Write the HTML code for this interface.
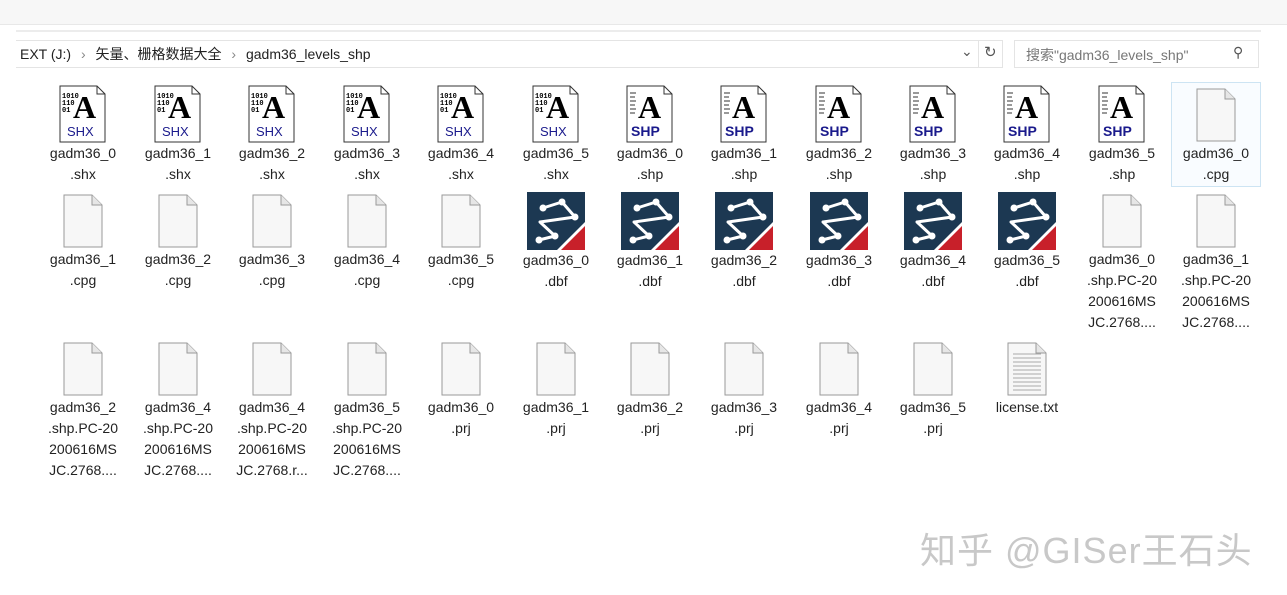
<!DOCTYPE html>
<html><head><meta charset="utf-8"><style>
body{margin:0;width:1287px;height:595px;background:#fff;position:relative;overflow:hidden;font-family:"Liberation Sans","Noto Sans CJK SC",sans-serif;}
.it{position:absolute;width:92px;text-align:center;font-size:14px;line-height:21px;color:#222;}
.it svg{display:block;margin:0 auto;}
.a{position:absolute;}
</style></head><body>
<div class="a" style="left:0;top:0;width:1287px;height:24px;background:#f7f7f7;border-bottom:1px solid #e8e8e8"></div>
<div class="a" style="left:16px;top:30px;width:1245px;height:2px;background:#ececec"></div>
<div class="a" style="left:16px;top:40px;width:986px;height:26px;border:1px solid #e4e4e4;border-left:none"></div>
<div class="a" style="left:20px;top:44px;font-size:14px;color:#222">EXT (J:) <span style="color:#888;margin:0 6px">›</span> 矢量、栅格数据大全 <span style="color:#888;margin:0 6px">›</span> gadm36_levels_shp</div>
<div class="a" style="left:961px;top:43px;font-size:14px;color:#555">⌄</div>
<div class="a" style="left:978px;top:40px;width:1px;height:27px;background:#e4e4e4"></div>
<div class="a" style="left:984px;top:43px;font-size:15px;color:#555">↻</div>
<div class="a" style="left:1014px;top:40px;width:243px;height:26px;border:1px solid #e4e4e4"></div>
<div class="a" style="left:1026px;top:45px;font-size:14px;color:#777">搜索"gadm36_levels_shp"</div>
<div class="a" style="left:1233px;top:44px;font-size:14px;color:#555">⚲</div>
<div class="a" style="left:1171px;top:82px;width:88px;height:103px;border:1px solid #cde4f3;background:#f9fcff"></div>

<svg width="0" height="0" style="position:absolute"><defs>
<g id="blank"><path d="M1 1H29L39 11V53H1Z" fill="#f7f7f7" stroke="#9a9a9a"/><path d="M29 1V11H39" fill="#e6e6e6" stroke="#9a9a9a"/></g>
<g id="dbf"><rect width="58" height="58" fill="#1c3852"/><path d="M30 58L58 30V58Z" fill="#fff"/><path d="M34 58L58 34V58Z" fill="#c8202a"/><path d="M16 16L35 10L48 25L13 30L28 44L12 48" stroke="#fff" stroke-width="3" fill="none" stroke-linejoin="round"/><circle cx="35" cy="10" r="3.5" fill="#fff"/><circle cx="48" cy="25" r="3.5" fill="#fff"/><circle cx="16" cy="16" r="3.5" fill="#fff"/><circle cx="28" cy="44" r="3.5" fill="#fff"/><circle cx="12" cy="48" r="3.5" fill="#fff"/></g>
</defs></svg>

<!-- row 1 -->
<div class="it" style="left:37px;top:85px"><svg width="48" height="58"><path d="M1 1H38L46 9V57H1Z" fill="#fff" stroke="#333"/><path d="M38 1V9H46" fill="none" stroke="#333"/><text x="3" y="13" font-size="7" font-weight="bold" font-family="Liberation Mono">1010</text><text x="3" y="20" font-size="7" font-weight="bold" font-family="Liberation Mono">110</text><text x="3" y="27" font-size="7" font-weight="bold" font-family="Liberation Mono">01</text><text x="14" y="33" font-size="32" font-weight="bold" font-family="Liberation Serif">A</text><text x="8" y="51" font-size="13" fill="#1a1a8c" font-family="Liberation Sans">SHX</text></svg>gadm36_0<br>.shx</div>
<div class="it" style="left:132px;top:85px"><svg width="48" height="58"><path d="M1 1H38L46 9V57H1Z" fill="#fff" stroke="#333"/><path d="M38 1V9H46" fill="none" stroke="#333"/><text x="3" y="13" font-size="7" font-weight="bold" font-family="Liberation Mono">1010</text><text x="3" y="20" font-size="7" font-weight="bold" font-family="Liberation Mono">110</text><text x="3" y="27" font-size="7" font-weight="bold" font-family="Liberation Mono">01</text><text x="14" y="33" font-size="32" font-weight="bold" font-family="Liberation Serif">A</text><text x="8" y="51" font-size="13" fill="#1a1a8c">SHX</text></svg>gadm36_1<br>.shx</div>
<div class="it" style="left:226px;top:85px"><svg width="48" height="58"><path d="M1 1H38L46 9V57H1Z" fill="#fff" stroke="#333"/><path d="M38 1V9H46" fill="none" stroke="#333"/><text x="3" y="13" font-size="7" font-weight="bold" font-family="Liberation Mono">1010</text><text x="3" y="20" font-size="7" font-weight="bold" font-family="Liberation Mono">110</text><text x="3" y="27" font-size="7" font-weight="bold" font-family="Liberation Mono">01</text><text x="14" y="33" font-size="32" font-weight="bold" font-family="Liberation Serif">A</text><text x="8" y="51" font-size="13" fill="#1a1a8c">SHX</text></svg>gadm36_2<br>.shx</div>
<div class="it" style="left:321px;top:85px"><svg width="48" height="58"><path d="M1 1H38L46 9V57H1Z" fill="#fff" stroke="#333"/><path d="M38 1V9H46" fill="none" stroke="#333"/><text x="3" y="13" font-size="7" font-weight="bold" font-family="Liberation Mono">1010</text><text x="3" y="20" font-size="7" font-weight="bold" font-family="Liberation Mono">110</text><text x="3" y="27" font-size="7" font-weight="bold" font-family="Liberation Mono">01</text><text x="14" y="33" font-size="32" font-weight="bold" font-family="Liberation Serif">A</text><text x="8" y="51" font-size="13" fill="#1a1a8c">SHX</text></svg>gadm36_3<br>.shx</div>
<div class="it" style="left:415px;top:85px"><svg width="48" height="58"><path d="M1 1H38L46 9V57H1Z" fill="#fff" stroke="#333"/><path d="M38 1V9H46" fill="none" stroke="#333"/><text x="3" y="13" font-size="7" font-weight="bold" font-family="Liberation Mono">1010</text><text x="3" y="20" font-size="7" font-weight="bold" font-family="Liberation Mono">110</text><text x="3" y="27" font-size="7" font-weight="bold" font-family="Liberation Mono">01</text><text x="14" y="33" font-size="32" font-weight="bold" font-family="Liberation Serif">A</text><text x="8" y="51" font-size="13" fill="#1a1a8c">SHX</text></svg>gadm36_4<br>.shx</div>
<div class="it" style="left:510px;top:85px"><svg width="48" height="58"><path d="M1 1H38L46 9V57H1Z" fill="#fff" stroke="#333"/><path d="M38 1V9H46" fill="none" stroke="#333"/><text x="3" y="13" font-size="7" font-weight="bold" font-family="Liberation Mono">1010</text><text x="3" y="20" font-size="7" font-weight="bold" font-family="Liberation Mono">110</text><text x="3" y="27" font-size="7" font-weight="bold" font-family="Liberation Mono">01</text><text x="14" y="33" font-size="32" font-weight="bold" font-family="Liberation Serif">A</text><text x="8" y="51" font-size="13" fill="#1a1a8c">SHX</text></svg>gadm36_5<br>.shx</div>
<div class="it" style="left:604px;top:85px"><svg width="48" height="58"><path d="M1 1H38L46 9V57H1Z" fill="#fff" stroke="#333"/><path d="M38 1V9H46" fill="none" stroke="#333"/><path d="M4 8H10M4 12H9M4 16H10M4 20H9M4 24H10M4 28H9" stroke="#333"/><text x="12" y="33" font-size="32" font-weight="bold" font-family="Liberation Serif">A</text><text x="5" y="51" font-size="14" font-weight="bold" fill="#1a1a8c">SHP</text></svg>gadm36_0<br>.shp</div>
<div class="it" style="left:698px;top:85px"><svg width="48" height="58"><path d="M1 1H38L46 9V57H1Z" fill="#fff" stroke="#333"/><path d="M38 1V9H46" fill="none" stroke="#333"/><path d="M4 8H10M4 12H9M4 16H10M4 20H9M4 24H10M4 28H9" stroke="#333"/><text x="12" y="33" font-size="32" font-weight="bold" font-family="Liberation Serif">A</text><text x="5" y="51" font-size="14" font-weight="bold" fill="#1a1a8c">SHP</text></svg>gadm36_1<br>.shp</div>
<div class="it" style="left:793px;top:85px"><svg width="48" height="58"><path d="M1 1H38L46 9V57H1Z" fill="#fff" stroke="#333"/><path d="M38 1V9H46" fill="none" stroke="#333"/><path d="M4 8H10M4 12H9M4 16H10M4 20H9M4 24H10M4 28H9" stroke="#333"/><text x="12" y="33" font-size="32" font-weight="bold" font-family="Liberation Serif">A</text><text x="5" y="51" font-size="14" font-weight="bold" fill="#1a1a8c">SHP</text></svg>gadm36_2<br>.shp</div>
<div class="it" style="left:887px;top:85px"><svg width="48" height="58"><path d="M1 1H38L46 9V57H1Z" fill="#fff" stroke="#333"/><path d="M38 1V9H46" fill="none" stroke="#333"/><path d="M4 8H10M4 12H9M4 16H10M4 20H9M4 24H10M4 28H9" stroke="#333"/><text x="12" y="33" font-size="32" font-weight="bold" font-family="Liberation Serif">A</text><text x="5" y="51" font-size="14" font-weight="bold" fill="#1a1a8c">SHP</text></svg>gadm36_3<br>.shp</div>
<div class="it" style="left:981px;top:85px"><svg width="48" height="58"><path d="M1 1H38L46 9V57H1Z" fill="#fff" stroke="#333"/><path d="M38 1V9H46" fill="none" stroke="#333"/><path d="M4 8H10M4 12H9M4 16H10M4 20H9M4 24H10M4 28H9" stroke="#333"/><text x="12" y="33" font-size="32" font-weight="bold" font-family="Liberation Serif">A</text><text x="5" y="51" font-size="14" font-weight="bold" fill="#1a1a8c">SHP</text></svg>gadm36_4<br>.shp</div>
<div class="it" style="left:1076px;top:85px"><svg width="48" height="58"><path d="M1 1H38L46 9V57H1Z" fill="#fff" stroke="#333"/><path d="M38 1V9H46" fill="none" stroke="#333"/><path d="M4 8H10M4 12H9M4 16H10M4 20H9M4 24H10M4 28H9" stroke="#333"/><text x="12" y="33" font-size="32" font-weight="bold" font-family="Liberation Serif">A</text><text x="5" y="51" font-size="14" font-weight="bold" fill="#1a1a8c">SHP</text></svg>gadm36_5<br>.shp</div>
<div class="it" style="left:1170px;top:88px"><svg width="40" height="55"><use href="#blank"/></svg>gadm36_0<br>.cpg</div>

<!-- row 2 -->
<div class="it" style="left:37px;top:194px"><svg width="40" height="55"><use href="#blank"/></svg>gadm36_1<br>.cpg</div>
<div class="it" style="left:132px;top:194px"><svg width="40" height="55"><use href="#blank"/></svg>gadm36_2<br>.cpg</div>
<div class="it" style="left:226px;top:194px"><svg width="40" height="55"><use href="#blank"/></svg>gadm36_3<br>.cpg</div>
<div class="it" style="left:321px;top:194px"><svg width="40" height="55"><use href="#blank"/></svg>gadm36_4<br>.cpg</div>
<div class="it" style="left:415px;top:194px"><svg width="40" height="55"><use href="#blank"/></svg>gadm36_5<br>.cpg</div>
<div class="it" style="left:510px;top:192px"><svg width="58" height="58"><use href="#dbf"/></svg>gadm36_0<br>.dbf</div>
<div class="it" style="left:604px;top:192px"><svg width="58" height="58"><use href="#dbf"/></svg>gadm36_1<br>.dbf</div>
<div class="it" style="left:698px;top:192px"><svg width="58" height="58"><use href="#dbf"/></svg>gadm36_2<br>.dbf</div>
<div class="it" style="left:793px;top:192px"><svg width="58" height="58"><use href="#dbf"/></svg>gadm36_3<br>.dbf</div>
<div class="it" style="left:887px;top:192px"><svg width="58" height="58"><use href="#dbf"/></svg>gadm36_4<br>.dbf</div>
<div class="it" style="left:981px;top:192px"><svg width="58" height="58"><use href="#dbf"/></svg>gadm36_5<br>.dbf</div>
<div class="it" style="left:1076px;top:194px"><svg width="40" height="55"><use href="#blank"/></svg>gadm36_0<br>.shp.PC-20<br>200616MS<br>JC.2768....</div>
<div class="it" style="left:1170px;top:194px"><svg width="40" height="55"><use href="#blank"/></svg>gadm36_1<br>.shp.PC-20<br>200616MS<br>JC.2768....</div>

<!-- row 3 -->
<div class="it" style="left:37px;top:342px"><svg width="40" height="55"><use href="#blank"/></svg>gadm36_2<br>.shp.PC-20<br>200616MS<br>JC.2768....</div>
<div class="it" style="left:132px;top:342px"><svg width="40" height="55"><use href="#blank"/></svg>gadm36_4<br>.shp.PC-20<br>200616MS<br>JC.2768....</div>
<div class="it" style="left:226px;top:342px"><svg width="40" height="55"><use href="#blank"/></svg>gadm36_4<br>.shp.PC-20<br>200616MS<br>JC.2768.r...</div>
<div class="it" style="left:321px;top:342px"><svg width="40" height="55"><use href="#blank"/></svg>gadm36_5<br>.shp.PC-20<br>200616MS<br>JC.2768....</div>
<div class="it" style="left:415px;top:342px"><svg width="40" height="55"><use href="#blank"/></svg>gadm36_0<br>.prj</div>
<div class="it" style="left:510px;top:342px"><svg width="40" height="55"><use href="#blank"/></svg>gadm36_1<br>.prj</div>
<div class="it" style="left:604px;top:342px"><svg width="40" height="55"><use href="#blank"/></svg>gadm36_2<br>.prj</div>
<div class="it" style="left:698px;top:342px"><svg width="40" height="55"><use href="#blank"/></svg>gadm36_3<br>.prj</div>
<div class="it" style="left:793px;top:342px"><svg width="40" height="55"><use href="#blank"/></svg>gadm36_4<br>.prj</div>
<div class="it" style="left:887px;top:342px"><svg width="40" height="55"><use href="#blank"/></svg>gadm36_5<br>.prj</div>
<div class="it" style="left:981px;top:342px"><svg width="40" height="55"><use href="#blank"/><path d="M6 12H34M6 16H34M6 20H34M6 24H34M6 28H34M6 32H34M6 36H34M6 40H34M6 44H34M6 48H34" stroke="#aaa"/></svg>license.txt</div>

<div class="a" style="left:920px;top:522px;font-size:36px;color:#c8c8c8;letter-spacing:1px;font-family:'Liberation Sans','Noto Sans CJK SC',sans-serif">知乎 @GISer王石头</div>
</body></html>
